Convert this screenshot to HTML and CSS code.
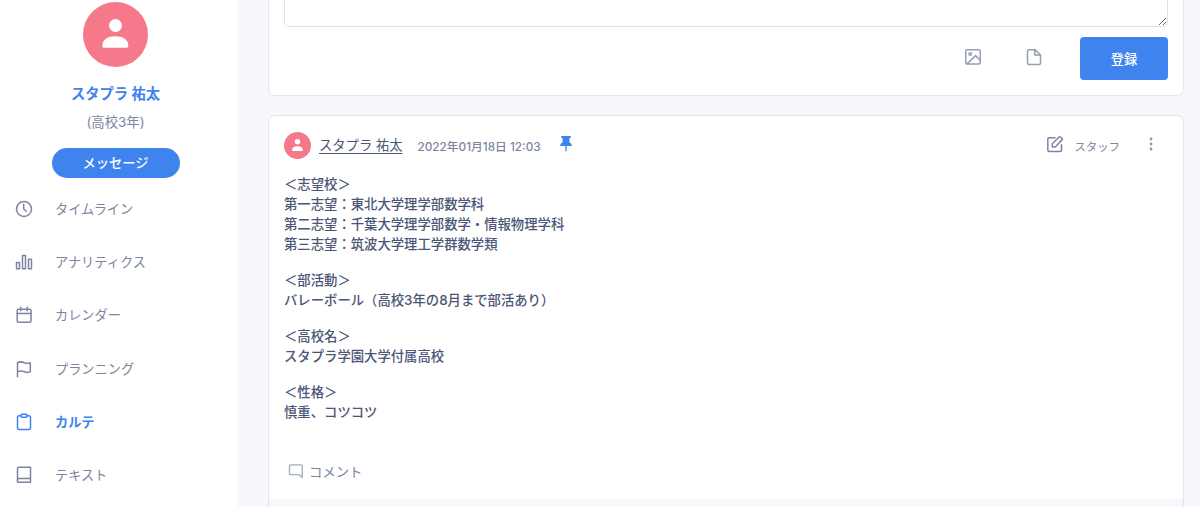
FILE: index.html
```html
<!DOCTYPE html>
<html lang="ja">
<head>
    <meta charset="UTF-8">
    <meta name="viewport" content="width=device-width, initial-scale=1.0">
    <title>カルテ</title>
    <link rel="stylesheet" href="styles.css">
</head>
<body>
    <div class="page">
        <aside class="sidebar">
            <svg class="avatar" viewBox="0 0 65 65">
                <circle cx="32.5" cy="32.5" r="32.5"/>
                <circle class="person" cx="32.5" cy="23.5" r="6.5"/>
                <path class="person" d="M19.3 43.500c0-6 5.600-9.300 13-9.300s13 3.300 13 9.300c0 1.500-.4 2.200-1.700 2.200H21c-1.300 0-1.700-.7-1.700-2.200z"/>
            </svg>
            <div class="student-name">スタプラ 祐太</div>
            <div class="grade">(高校3年)</div>
            <button class="message">メッセージ</button>
            <nav class="menu">
                <a class="menu-item">
                    <svg class="icon" viewBox="0 0 18 18"><circle cx="9" cy="9" r="7.500"/><path d="M8.700 4.200v4.800l2.500 2.300"/></svg>
                    タイムライン
                </a>
                <a class="menu-item">
                    <svg class="icon" viewBox="0 0 18 18"><path d="M1.500 9.600h3v6.100h-3zM7.500 2.500h3v13.200h-3zM13.500 6.200h3v9.500h-3z"/></svg>
                    アナリティクス
                </a>
                <a class="menu-item">
                    <svg class="icon" viewBox="0 0 18 18"><rect x="2.200" y="3.200" width="13.800" height="13" rx="1.500"/><path d="M2.200 7.500H16M5.700 1.300v3.400M12.300 1.300v3.400"/></svg>
                    カレンダー
                </a>
                <a class="menu-item">
                    <svg class="icon" viewBox="0 0 18 18"><path d="M2.500 16.800V2.700c3-1.600 5.300-.7 7 .1 2 .8 3.700 1 5.800-.1v9c-2 1.100-3.800.9-5.800.1-1.700-.8-4-1.400-7 .1"/></svg>
                    プランニング
                </a>
                <a class="menu-item active">
                    <svg class="icon" viewBox="0 0 18 18"><path d="M6 2.800H4Q2.500 2.800 2.500 4.300V15Q2.500 16.500 4 16.500H14Q15.500 16.500 15.500 15V4.300Q15.500 2.800 14 2.800H12"/><rect x="6" y="1.300" width="6" height="3" rx="1"/></svg>
                    カルテ
                </a>
                <a class="menu-item">
                    <svg class="icon" viewBox="0 0 18 18"><path d="M15.500 12.500H4.200a1.900 1.900 0 0 0 0 3.800H15.500V1.300H4Q2.500 1.300 2.500 2.800V14.500"/></svg>
                    テキスト
                </a>
            </nav>
        </aside>

        <main class="content">
            <section class="card editor">
                <textarea class="note" aria-label="カルテ"></textarea>
                <div class="editor-actions">
                    <svg class="icon light" viewBox="0 0 18 18"><rect x="1.700" y="1.700" width="14.600" height="14.300" rx="1.500"/><circle cx="6.200" cy="6" r="1.300"/><path d="M3.200 15.800l8.300-8.200 4.700 4.500"/></svg>
                    <svg class="icon light" viewBox="0 0 18 18"><path d="M9.800 1.700H4Q2.500 1.700 2.500 3.200V15Q2.500 16.500 4 16.500H14Q15.500 16.500 15.500 15V7L10.200 1.700M9.800 1.700V7h5.700"/></svg>
                    <button class="submit">登録</button>
                </div>
            </section>

            <article class="card entry">
                <header class="entry-header">
                    <svg class="avatar small" viewBox="0 0 65 65">
                        <circle cx="32.5" cy="32.5" r="32.5"/>
                        <circle class="person" cx="32.5" cy="23.5" r="6.5"/>
                        <path class="person" d="M19.3 43.500c0-6 5.600-9.300 13-9.300s13 3.300 13 9.300c0 1.500-.4 2.200-1.700 2.200H21c-1.300 0-1.700-.7-1.700-2.200z"/>
                    </svg>
                    <a class="author">スタプラ 祐太</a>
                    <time class="date">2022年01月18日 12:03</time>
                    <svg class="pin" viewBox="0 0 12 16"><path d="M1.300 0h9.400v2H9.500v4.500c1.300.6 2.200 1.700 2.500 3.500H6.700v4.500L6 16l-.7-1.500V10H0c.3-1.800 1.200-2.900 2.500-3.500V2H1.300z"/></svg>
                    <div class="entry-tools">
                        <svg class="icon" viewBox="0 0 18 18"><path d="M9 2.800H3.300Q1.800 2.800 1.800 4.300V15Q1.800 16.500 3.300 16.500H14Q15.500 16.500 15.500 15V9.800M6.300 11.900V8.700l6.800-6.700Q13.800 1.300 14.500 2l1.500 1.500Q16.700 4.200 16 4.900l-6.800 7z"/></svg>
                        <span class="staff">スタッフ</span>
                        <svg class="more" viewBox="0 0 4 14"><circle cx="2" cy="2" r="1.400"/><circle cx="2" cy="7" r="1.400"/><circle cx="2" cy="12" r="1.400"/></svg>
                    </div>
                </header>
                <div class="entry-body">
                    <p>＜志望校＞<br>第一志望：東北大学理学部数学科<br>第二志望：千葉大学理学部数学・情報物理学科<br>第三志望：筑波大学理工学群数学類</p>
                    <p>＜部活動＞<br>バレーボール（高校3年の8月まで部活あり）</p>
                    <p>＜高校名＞<br>スタプラ学園大学付属高校</p>
                    <p>＜性格＞<br>慎重、コツコツ</p>
                </div>
                <div class="comment">
                    <svg class="comment-icon" viewBox="0 0 16 16"><path d="M14.300 14.500l-3-2.800H3Q1.500 11.700 1.500 10.200V3.300Q1.500 1.800 3 1.800H12.800Q14.300 1.800 14.300 3.300z"/></svg>
                    コメント
                </div>
                <div class="comment-list"></div>
            </article>
        </main>
    </div>
</body>
</html>
```

FILE: styles.css
```css
* {
    box-sizing: border-box;
}
body {
    margin: 0;
    font-family: Inter, "Noto Sans CJK JP", sans-serif;
    font-size: 13.35px;
    color: #4b5677;
    background-color: #fff;
}
.page {
    display: flex;
    height: 507px;
    overflow: hidden;
    background-color: #f6f8fc;
}
.sidebar {
    display: flex;
    flex-direction: column;
    align-items: center;
    width: 238px;
    padding: 2px 7px 0 0;
    flex-shrink: 0;
    background-color: #fff;
}
.avatar {
    width: 65px;
    height: 65px;
    flex-shrink: 0;
    fill: #f5798b;
}
.avatar .person {
    fill: #fff;
}
.avatar.small {
    width: 27px;
    height: 27px;
}
.student-name {
    margin-top: 16px;
    line-height: 22px;
    font-size: 14.3px;
    font-weight: 700;
    color: #3f83f0;
}
.grade {
    margin-top: 7px;
    line-height: 20px;
    font-size: 13.4px;
    color: #7c859f;
}
button {
    border: none;
    font-family: inherit;
    color: #fff;
    background-color: #3f83ee;
}
.message {
    width: 128px;
    height: 30px;
    margin-top: 16px;
    padding: 0 0 2px;
    border-radius: 15px;
    font-size: 13.3px;
    font-weight: 500;
}
.menu {
    align-self: stretch;
    margin-top: 4px;
}
.menu-item {
    display: flex;
    align-items: center;
    gap: 22px;
    height: 53.35px;
    padding-left: 15px;
    line-height: 20px;
    font-size: 13.2px;
    color: #7c859f;
}
.menu-item.active {
    font-weight: 700;
    color: #3f83f0;
}
.icon {
    width: 18px;
    height: 18px;
    flex-shrink: 0;
    fill: none;
    stroke: currentColor;
    stroke-width: 1.5;
    stroke-linecap: round;
    stroke-linejoin: round;
}
.icon.light {
    color: #959db3;
}
.content {
    flex: 1;
    padding: 0 16px 0 30px;
}
.card {
    border: 1px solid #e2e5ee;
    border-radius: 7px;
    background-color: #fff;
}
.editor {
    height: 96px;
    padding: 0 15px;
    border-top: none;
    border-radius: 0 0 7px 7px;
}
.note {
    display: block;
    width: 100%;
    height: 27px;
    border: 1px solid #dfe2ec;
    border-top: none;
    border-radius: 0 0 5px 5px;
    outline: none;
}
.editor-actions {
    display: flex;
    justify-content: flex-end;
    align-items: center;
    margin-top: 10px;
}
.editor-actions .icon {
    margin: 0 43px 3px 0;
}
.editor-actions .icon + .icon {
    margin-right: 37px;
}
.submit {
    width: 88px;
    height: 43px;
    padding: 0 0 1px;
    border-radius: 4px;
    font-size: 13.3px;
    font-weight: 500;
}
.entry {
    height: 420px;
    margin-top: 19px;
}
.entry-header {
    display: flex;
    align-items: center;
    padding: 16px 26px 0 15px;
}
.author {
    margin: 0 0 2px 8px;
    font-size: 13.3px;
    line-height: 20px;
    text-decoration: underline;
    text-underline-offset: 3px;
}
.date {
    margin-left: 15px;
    font-size: 11.75px;
    font-weight: 500;
    color: #7c859f;
}
.pin {
    width: 12px;
    height: 16px;
    margin: 0 0 3px 19px;
    fill: #3f83f0;
}
.entry-tools {
    display: flex;
    align-items: center;
    margin-left: auto;
    color: #7c859f;
}
.entry-tools .icon {
    margin-bottom: 3px;
}
.staff {
    margin-left: 10px;
    font-size: 11.4px;
}
.more {
    width: 4px;
    height: 14px;
    margin: 0 4px 3px 29px;
    fill: #8d96ad;
}
.entry-body {
    padding: 15px 15px 0;
    line-height: 20px;
    font-weight: 500;
}
.entry-body p {
    margin: 0 0 16.1px;
}
.comment {
    display: flex;
    align-items: center;
    gap: 5px;
    height: 20px;
    margin: 39px 0 0 19px;
    color: #7c859f;
}
.comment-icon {
    width: 16px;
    height: 16px;
    fill: none;
    stroke: #a3aabd;
    stroke-width: 1.3;
    stroke-linejoin: round;
}
.comment-list {
    height: 36px;
    margin-top: 18px;
    background-color: #f6f8fc;
}
```
